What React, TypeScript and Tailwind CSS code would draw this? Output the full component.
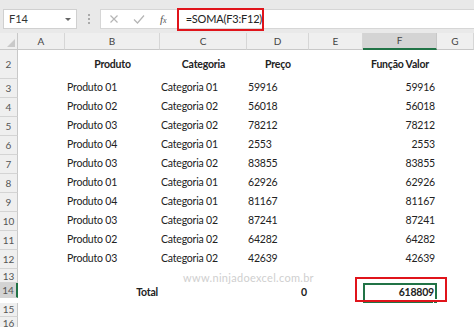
import React from "react";

const COLS = "18px 47px 95px 87px 62px 54px 74px 37px";
const font = { fontFamily: "Lato, 'Liberation Sans', sans-serif" };

const data: [string, string, string][] = [
  ["Produto 01", "Categoria 01", "59916"],
  ["Produto 02", "Categoria 02", "56018"],
  ["Produto 03", "Categoria 02", "78212"],
  ["Produto 04", "Categoria 01", "2553"],
  ["Produto 03", "Categoria 02", "83855"],
  ["Produto 01", "Categoria 01", "62926"],
  ["Produto 04", "Categoria 01", "81167"],
  ["Produto 03", "Categoria 02", "87241"],
  ["Produto 02", "Categoria 02", "64282"],
  ["Produto 03", "Categoria 02", "42639"],
];

function RowHead({ n, h, sel }: { n: number; h: string; sel?: boolean }) {
  return (
    <div
      className={`flex items-center justify-center border-b border-[#d4d4d4] text-[10px] leading-none text-[#555] ${h} ${
        sel ? "bg-[#d3d3d3] border-r-2 border-r-[#217346]" : "bg-[#efefef] border-r border-r-[#c8c8c8]"
      }`}
    >
      {n}
    </div>
  );
}

const cellText = "text-[10.5px] tracking-[-0.2px] text-[#222]";

export default function App() {
  return (
    <div className="w-[474px] h-[327px] overflow-hidden bg-white relative text-[#1a1a1a]" style={font}>
      {/* top bar */}
      <div className="h-[33px] bg-[#e9e9e9] flex items-start pt-[9px]">
        <div className="ml-[3px] w-[74px] h-[20px] bg-white border border-[#d0d0d0] flex items-center justify-between pl-[5px] pr-[5px]">
          <span className="text-[11px] text-[#333]">F14</span>
          <span className="w-0 h-0 border-l-[3px] border-r-[3px] border-t-[3px] border-l-transparent border-r-transparent border-t-[#666]" />
        </div>
        <div className="w-[23px] h-[20px] flex flex-col items-center justify-center gap-[2px]">
          <span className="w-[2px] h-[2px] bg-[#aaa]" />
          <span className="w-[2px] h-[2px] bg-[#aaa]" />
          <span className="w-[2px] h-[2px] bg-[#aaa]" />
        </div>
        <div className="flex-1 h-[20px] bg-white border-y border-l border-[#d6d6d6] flex items-center relative">
          <svg width="10" height="10" viewBox="0 0 10 10" className="ml-[8px]">
            <path d="M1.5 1.5 L8.5 8.5 M8.5 1.5 L1.5 8.5" stroke="#b5b5b5" strokeWidth="1.2" />
          </svg>
          <svg width="12" height="10" viewBox="0 0 12 10" className="ml-[14px]">
            <path d="M1 5.5 L4.5 9 L11 1.5" stroke="#b5b5b5" strokeWidth="1.2" fill="none" />
          </svg>
          <span className="ml-[15px] text-[11px] italic text-[#555]" style={{ fontFamily: "'Liberation Serif', serif" }}>
            f<span className="text-[8px]">x</span>
          </span>
          <div className="ml-[10px] -my-[2px] w-[87px] h-[23px] border-2 border-[#e0141b] flex items-center pl-[7px]">
            <span className="text-[11px] tracking-[-0.2px] text-[#222] whitespace-nowrap">=SOMA(F3:F12)</span>
          </div>
        </div>
      </div>

      {/* grid */}
      <div className="grid" style={{ gridTemplateColumns: COLS }}>
        {/* column headers */}
        <div className="h-[17px] bg-[#efefef] border-r border-b border-[#c8c8c8] flex items-end justify-end p-[2px]">
          <span className="w-0 h-0" style={{ borderBottom: "8px solid #c9c9c9", borderLeft: "8px solid transparent" }} />
        </div>
        {["A", "B", "C", "D", "E", "F", "G"].map((c) => (
          <div
            key={c}
            className={`h-[17px] flex items-center justify-center text-[10px] text-[#444] ${
              c === "F"
                ? "bg-[#d4d4d4] border-b-2 border-[#217346] border-r border-r-[#c8c8c8]"
                : "bg-[#efefef] border-b border-[#c8c8c8] border-r border-r-[#d6d6d6]"
            }`}
          >
            {c}
          </div>
        ))}

        {/* row 2 */}
        <RowHead n={2} h="h-[29px]" />
        <div />
        <div className={`flex items-center justify-center font-bold ${cellText}`}>Produto</div>
        <div className={`flex items-center justify-center font-bold ${cellText}`}>Categoria</div>
        <div className={`flex items-center justify-center font-bold ${cellText}`}>Preço</div>
        <div />
        <div className={`flex items-center justify-center font-bold whitespace-nowrap ${cellText}`}>Função Valor</div>
        <div />

        {data.map((r, i) => (
          <React.Fragment key={i}>
            <RowHead n={i + 3} h="h-[19px]" />
            <div />
            <div className={`flex items-end pb-[2px] pl-[2px] whitespace-nowrap ${cellText}`}>{r[0]}</div>
            <div className={`flex items-end pb-[2px] pl-[1px] whitespace-nowrap ${cellText}`}>{r[1]}</div>
            <div className={`flex items-end pb-[2px] pl-[1px] ${cellText}`}>{r[2]}</div>
            <div />
            <div className={`flex items-end justify-end pb-[2px] pr-[2px] ${cellText}`}>{r[2]}</div>
            <div />
          </React.Fragment>
        ))}

        {/* row 13 */}
        <RowHead n={13} h="h-[14px]" />
        <div className="col-span-7" />

        {/* row 14 */}
        <RowHead n={14} h="h-[15px]" sel />
        <div />
        <div className={`flex items-center justify-end pr-[2px] font-bold ${cellText}`}>Total</div>
        <div />
        <div className={`flex items-center justify-end pr-[2px] font-bold ${cellText}`}>0</div>
        <div />
        <div className={`relative border-2 border-[#217346] flex items-center justify-end pr-[1px] font-bold ${cellText}`}>
          618809
          <span className="absolute -right-[3px] -bottom-[3px] w-[5px] h-[5px] bg-[#217346] border border-white" />
        </div>
        <div />

        {/* rows 15-16 */}
        <RowHead n={15} h="h-[14px]" />
        <div className="col-span-7" />
        <RowHead n={16} h="h-[14px]" />
        <div className="col-span-7" />
      </div>

      {/* watermark */}
      <div className="absolute left-[183px] top-[270px] text-[11px] text-[#cfcfcf] tracking-[0.3px]">www.ninjadoexcel.com.br</div>

      {/* red highlight around result */}
      <div className="absolute left-[355px] top-[277px] w-[92px] h-[25px] border-[2.5px] border-[#e0141b]" />
    </div>
  );
}
